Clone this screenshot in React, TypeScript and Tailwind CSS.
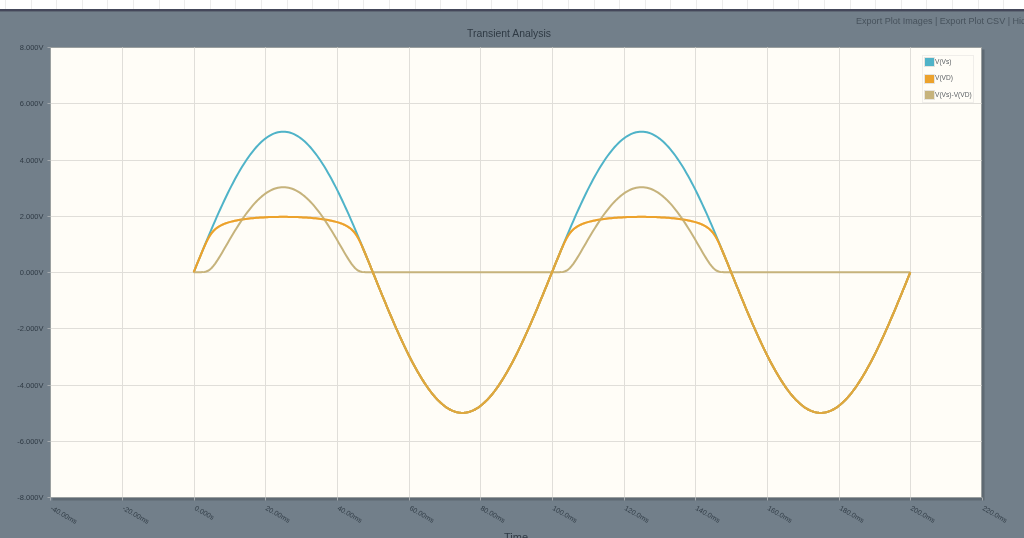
import { useMemo } from 'react'

// Plot geometry, in px inside the chart svg (svg starts at y = 12)
const X0 = 193.7
const PX_PER_MS = 3.583
const Y0 = 260.3
const PX_PER_V = 28.12
const LEFT = 50.5
const RIGHT = 981.5
const TOP = 35.5
const BOTTOM = 485.5

const yTicks = ['8.000V', '6.000V', '4.000V', '2.000V', '0.000V', '-2.000V', '-4.000V', '-6.000V', '-8.000V']
const xTicks = [
  '-40.00ms', '-20.00ms', '0.000s', '20.00ms', '40.00ms', '60.00ms', '80.00ms',
  '100.0ms', '120.0ms', '140.0ms', '160.0ms', '180.0ms', '200.0ms', '220.0ms',
]

const legend = [
  { label: 'V(Vs)', swatch: 'bg-[#4fb3c8]' },
  { label: 'V(VD)', swatch: 'bg-[#eca22c]' },
  { label: 'V(Vs)-V(VD)', swatch: 'bg-[#c6b37c]' },
]

// Diode drop for a given source voltage, solved by bisection
function diode(vs: number) {
  if (vs <= 0) return vs
  let lo = 0
  let hi = vs
  for (let i = 0; i < 40; i++) {
    const vd = (lo + hi) / 2
    const modelled = 1.97 + 0.194 * Math.log(Math.max(vs - vd, 1e-9) / 3)
    if (modelled > vd) lo = vd
    else hi = vd
  }
  return (lo + hi) / 2
}

const source = (t: number) => 5 * Math.sin((2 * Math.PI * t) / 100)

function toPath(fn: (t: number) => number, from = 0, to = 200) {
  const parts: string[] = []
  for (let t = from; t <= to; t += 0.5) {
    const x = X0 + t * PX_PER_MS
    const y = Y0 - fn(t) * PX_PER_V
    parts.push(`${parts.length ? 'L' : 'M'}${x.toFixed(2)} ${y.toFixed(2)}`)
  }
  return parts.join(' ')
}

function Chart() {
  const paths = useMemo(() => {
    const vd = (t: number) => diode(source(t))
    return {
      vs: toPath(source),
      vd: toPath(vd),
      diff: toPath((t) => source(t) - vd(t)),
      // below zero all traces sit on each other, so the line reads as a mix
      lowA: toPath(vd, 47, 103),
      lowB: toPath(vd, 147, 200),
    }
  }, [])

  return (
    <svg width={1024} height={526} className="block" style={{ fontFamily: '"Liberation Sans", Arial, sans-serif' }}>
      {/* frame shadow */}
      <rect x={LEFT + 2} y={TOP + 2} width={RIGHT - LEFT + 1} height={BOTTOM - TOP + 1} fill="#5f6a73" />
      <rect x={LEFT} y={TOP} width={RIGHT - LEFT} height={BOTTOM - TOP} fill="#fffdf7" stroke="#9a9f9f" strokeWidth={1} />

      {/* grid */}
      {xTicks.map((label, i) => {
        const x = Math.round(X0 + (i - 2) * 20 * PX_PER_MS) + 0.5
        return (
          <g key={label}>
            {i > 0 && i < 13 && <line x1={x} x2={x} y1={TOP} y2={BOTTOM} stroke="#e0ded9" strokeWidth={1} />}
            <line x1={x} x2={x} y1={BOTTOM} y2={BOTTOM + 3} stroke="#a4aaae" strokeWidth={1} />
          </g>
        )
      })}
      {yTicks.map((label, i) => {
        const y = Math.round(TOP + i * 56.25 - 0.5) + 0.5
        return (
          <g key={label}>
            {i > 0 && i < 8 && <line x1={LEFT} x2={RIGHT} y1={y} y2={y} stroke="#e0ded9" strokeWidth={1} />}
            <line x1={LEFT - 3} x2={LEFT} y1={y} y2={y} stroke="#a4aaae" strokeWidth={1} />
          </g>
        )
      })}

      {/* traces */}
      <g fill="none" strokeWidth={2} strokeLinejoin="round">
        <path d={paths.vs} stroke="#4fb3c8" />
        <path d={paths.vd} stroke="#eca22c" />
        <path d={paths.diff} stroke="#c6b37c" />
        <path d={paths.vd} stroke="#eca22c" strokeOpacity={0.6} />
        <path d={paths.lowA} stroke="#dea83f" />
        <path d={paths.lowB} stroke="#dea83f" />
      </g>

      {/* axis labels */}
      <g className="blur-[0.35px]" fill="#2f3a44">
        {xTicks.map((label, i) => {
          const x = Math.round(X0 + (i - 2) * 20 * PX_PER_MS)
          return (
            <text key={label} x={x} y={BOTTOM + 12} fontSize={7} transform={`rotate(30 ${x} ${BOTTOM + 12})`}>
              {label}
            </text>
          )
        })}
        {yTicks.map((label, i) => (
          <text key={label} x={LEFT - 7} y={TOP + i * 56.25 + 2.5} fontSize={7.5} textAnchor="end">
            {label}
          </text>
        ))}
        <text x={516} y={529} fontSize={11} textAnchor="middle">
          Time
        </text>
      </g>
    </svg>
  )
}

function Legend() {
  return (
    <div className="absolute left-[922px] top-[55px] w-[52px] h-[48px] bg-[#fffdf7] border border-[#f0eeea] flex flex-col justify-between pb-[1px] pl-[1px]">
      {legend.map((item) => (
        <div key={item.label} className="flex items-center h-[12px]">
          <span className="border border-[#e6e4df] shrink-0">
            <span className={`block w-[9px] h-[8px] ${item.swatch}`} />
          </span>
          <span className="text-[6.6px] leading-none whitespace-nowrap text-[#5a5f63] blur-[0.3px]">{item.label}</span>
        </div>
      ))}
    </div>
  )
}

export default function App() {
  const stripTicks = useMemo(() => Array.from({ length: 40 }, (_, i) => i), [])

  return (
    <div
      className="relative w-[1024px] h-[538px] overflow-hidden bg-[#727f8a]"
      style={{ fontFamily: '"Liberation Sans", Arial, sans-serif' }}
    >
      {/* top strip of the page above */}
      <div className="flex h-[9px] bg-white pl-[5px]">
        {stripTicks.map((i) => (
          <div key={i} className="w-[25.6px] shrink-0 border-l border-[#ececec]" />
        ))}
      </div>
      <div className="h-[2px] bg-[#44475a]" />
      <div className="h-[1px] bg-[#5f6875]" />

      <Chart />

      {/* overlays */}
      <div className="absolute left-[856px] top-[15px] whitespace-nowrap text-[9.05px] leading-[12px] text-[#47525c] blur-[0.3px]">
        Export Plot Images | Export Plot CSV | Hide
      </div>
      <div className="absolute left-[409px] w-[200px] top-[27px] text-center text-[10.4px] leading-[14px] text-[#2f3a44] blur-[0.3px]">
        Transient Analysis
      </div>
      <Legend />
    </div>
  )
}
